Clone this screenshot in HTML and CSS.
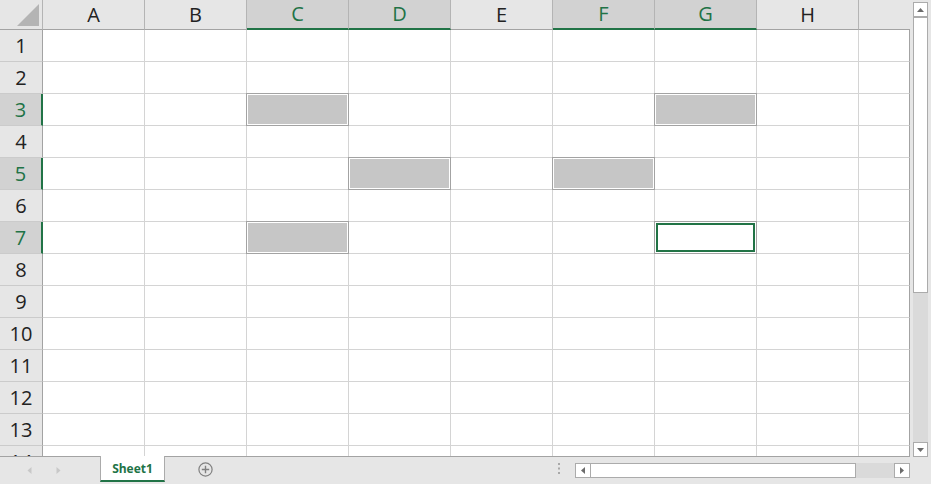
FILE: index.html
```html
<!DOCTYPE html>
<html lang="en">
<head>
  <title>Sheet1</title>
  <meta charset="utf-8">
  <link rel="stylesheet" href="styles.css">
</head>
<body>
<div class="app">
  <div class="top">
    <div class="sheet">
      <div class="corner"><svg width="42" height="29" viewBox="0 0 42 29"><polygon points="39,4 39,26 17,26" fill="#b4b4b4"/></svg></div>
      <div class="ch">A</div><div class="ch">B</div><div class="ch on">C</div><div class="ch on">D</div><div class="ch">E</div><div class="ch on">F</div><div class="ch on">G</div><div class="ch">H</div><div class="ch last"></div>

      <div class="rh">1</div><div class="c"></div><div class="c"></div><div class="c"></div><div class="c"></div><div class="c"></div><div class="c"></div><div class="c"></div><div class="c"></div><div class="c end"></div>
      <div class="rh">2</div><div class="c"></div><div class="c"></div><div class="c"></div><div class="c"></div><div class="c"></div><div class="c"></div><div class="c"></div><div class="c"></div><div class="c end"></div>
      <div class="rh on">3</div><div class="c"></div><div class="c"></div><div class="c sel"></div><div class="c"></div><div class="c"></div><div class="c"></div><div class="c sel"></div><div class="c"></div><div class="c end"></div>
      <div class="rh">4</div><div class="c"></div><div class="c"></div><div class="c"></div><div class="c"></div><div class="c"></div><div class="c"></div><div class="c"></div><div class="c"></div><div class="c end"></div>
      <div class="rh on">5</div><div class="c"></div><div class="c"></div><div class="c"></div><div class="c sel"></div><div class="c"></div><div class="c sel"></div><div class="c"></div><div class="c"></div><div class="c end"></div>
      <div class="rh">6</div><div class="c"></div><div class="c"></div><div class="c"></div><div class="c"></div><div class="c"></div><div class="c"></div><div class="c"></div><div class="c"></div><div class="c end"></div>
      <div class="rh on">7</div><div class="c"></div><div class="c"></div><div class="c sel"></div><div class="c"></div><div class="c"></div><div class="c"></div><div class="c act"></div><div class="c"></div><div class="c end"></div>
      <div class="rh">8</div><div class="c"></div><div class="c"></div><div class="c"></div><div class="c"></div><div class="c"></div><div class="c"></div><div class="c"></div><div class="c"></div><div class="c end"></div>
      <div class="rh">9</div><div class="c"></div><div class="c"></div><div class="c"></div><div class="c"></div><div class="c"></div><div class="c"></div><div class="c"></div><div class="c"></div><div class="c end"></div>
      <div class="rh">10</div><div class="c"></div><div class="c"></div><div class="c"></div><div class="c"></div><div class="c"></div><div class="c"></div><div class="c"></div><div class="c"></div><div class="c end"></div>
      <div class="rh">11</div><div class="c"></div><div class="c"></div><div class="c"></div><div class="c"></div><div class="c"></div><div class="c"></div><div class="c"></div><div class="c"></div><div class="c end"></div>
      <div class="rh">12</div><div class="c"></div><div class="c"></div><div class="c"></div><div class="c"></div><div class="c"></div><div class="c"></div><div class="c"></div><div class="c"></div><div class="c end"></div>
      <div class="rh">13</div><div class="c"></div><div class="c"></div><div class="c"></div><div class="c"></div><div class="c"></div><div class="c"></div><div class="c"></div><div class="c"></div><div class="c end"></div>
      <div class="rh">14</div><div class="c"></div><div class="c"></div><div class="c"></div><div class="c"></div><div class="c"></div><div class="c"></div><div class="c"></div><div class="c"></div><div class="c end"></div>
    </div>
    <div class="vscroll">
      <div class="sbtn"><svg width="7" height="4" viewBox="0 0 7 4"><polygon points="0,4 7,4 3.5,0" fill="#6b6b6b"/></svg></div>
      <div class="vthumb"></div>
      <div class="vtrack"></div>
      <div class="sbtn"><svg width="7" height="4" viewBox="0 0 7 4"><polygon points="0,0 7,0 3.5,4" fill="#6b6b6b"/></svg></div>
    </div>
  </div>
  <div class="tabbar">
    <div class="nav">
      <svg width="5" height="7" viewBox="0 0 5 7"><polygon points="4.5,0 4.5,7 0.5,3.5" fill="#c8c8c8"/></svg>
      <svg width="5" height="7" viewBox="0 0 5 7"><polygon points="0.5,0 0.5,7 4.5,3.5" fill="#c8c8c8"/></svg>
    </div>
    <div class="tab">Sheet1</div>
    <div class="add">
      <svg width="15" height="15" viewBox="0 0 15 15"><circle cx="7.5" cy="7.5" r="6.6" fill="none" stroke="#808080" stroke-width="1.2"/><path d="M7.5 3.8v7.4M3.8 7.5h7.4" stroke="#808080" stroke-width="1.4"/></svg>
    </div>
    <div class="dots">
      <svg width="2" height="11" viewBox="0 0 2 11"><rect x="0" y="0" width="2" height="2" fill="#a8a8a8"/><rect x="0" y="4.5" width="2" height="2" fill="#a8a8a8"/><rect x="0" y="9" width="2" height="2" fill="#a8a8a8"/></svg>
    </div>
    <div class="hscroll">
      <div class="hbtn"><svg width="4" height="7" viewBox="0 0 4 7"><polygon points="4,0 4,7 0,3.5" fill="#6b6b6b"/></svg></div>
      <div class="hthumb"></div>
      <div class="htrack"></div>
      <div class="hbtn"><svg width="4" height="7" viewBox="0 0 4 7"><polygon points="0,0 0,7 4,3.5" fill="#6b6b6b"/></svg></div>
    </div>
  </div>
</div>
</body>
</html>
```

FILE: styles.css
```css
*
{
  box-sizing: border-box;
}
body
{
  margin: 0;
  background: #e6e6e6;
  font-family: "Open Sans", "Noto Sans", sans-serif;
  overflow: hidden;
}
.app
{
  width: 931px;
  height: 484px;
  display: flex;
  flex-direction: column;
}
.top
{
  display: flex;
  height: 457px;
  flex: none;
}
.sheet
{
  width: 910px;
  height: 457px;
  overflow: hidden;
  display: grid;
  grid-template-columns: 43px repeat(8, 102px) 51px;
  grid-template-rows: 30px repeat(14, 32px);
  border-bottom: 1px solid #a3a3a3;
}
.corner
{
  background: #e6e6e6;
  border-right: 1px solid #b4b4b4;
  border-bottom: 1px solid #a3a3a3;
}
.corner svg
{
  display: block;
}
.ch, .rh
{
  background: #e6e6e6;
  display: flex;
  align-items: center;
  justify-content: center;
  font-size: 20px;
  line-height: 1;
  color: #222;
}
.ch
{
  border-right: 1px solid #b4b4b4;
  border-bottom: 1px solid #a3a3a3;
}
.ch.on
{
  background: #d2d2d2;
  color: #217346;
  border-bottom: 2px solid #217346;
}
.ch.last
{
  border-right: none;
}
.rh
{
  border-right: 1px solid #a3a3a3;
  border-bottom: 1px solid #cbcbcb;
}
.rh.on
{
  background: #d2d2d2;
  color: #217346;
  border-right: 2px solid #217346;
}
.c
{
  background: #fff;
  border-right: 1px solid #d4d4d4;
  border-bottom: 1px solid #d4d4d4;
  position: relative;
}
.c.end
{
  border-right-color: #a3a3a3;
}
.c.sel::after, .c.act::after
{
  content: "";
  position: absolute;
  left: -1px;
  top: -1px;
  right: -1px;
  bottom: -1px;
  border: 1px solid #a3a3a3;
}
.c.sel::after
{
  background: #c6c6c6;
  box-shadow: inset 0 0 0 1px #fff;
}
.c.act::after
{
  box-shadow: inset 0 0 0 1px #fff, inset 0 0 0 3px #217346;
}
.vscroll
{
  width: 15px;
  margin-left: 3px;
  padding-top: 2px;
  display: flex;
  flex-direction: column;
}
.sbtn, .hbtn
{
  flex: none;
  background: #fff;
  border: 1px solid #ababab;
  display: flex;
  align-items: center;
  justify-content: center;
}
.sbtn
{
  height: 15px;
}
.sbtn svg, .hbtn svg
{
  display: block;
}
.vthumb
{
  height: 276px;
  flex: none;
  background: #fff;
  border: 1px solid #ababab;
}
.vtrack
{
  flex: 1;
  background: #dadada;
}
.tabbar
{
  height: 27px;
  display: flex;
  align-items: flex-start;
}
.nav
{
  width: 100px;
  flex: none;
  display: flex;
  gap: 24px;
  padding: 10px 0 0 27px;
}
.nav svg, .add svg, .dots svg
{
  display: block;
}
.tab
{
  width: 65px;
  height: 26px;
  margin-top: -1px;
  flex: none;
  background: #fff;
  border-left: 1px solid #ababab;
  border-right: 1px solid #ababab;
  border-bottom: 2px solid #217346;
  color: #217346;
  font-weight: bold;
  font-size: 12px;
  display: flex;
  align-items: center;
  justify-content: center;
}
.add
{
  margin: 5px 0 0 33px;
}
.dots
{
  margin: 6px 0 0 345px;
}
.hscroll
{
  margin: 6px 0 0 15px;
  width: 335px;
  height: 15px;
  display: flex;
}
.hbtn
{
  width: 16px;
}
.hthumb
{
  width: 265px;
  background: #fff;
  border: 1px solid #ababab;
  border-left: none;
}
.htrack
{
  width: 38px;
  background: #dadada;
}
```
